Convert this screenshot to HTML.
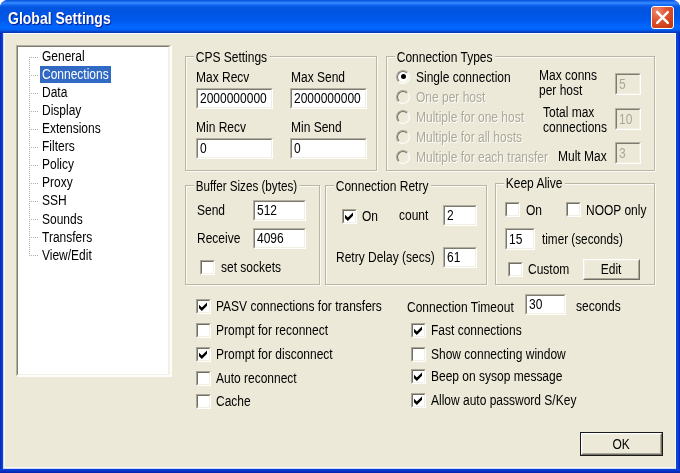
<!DOCTYPE html>
<html><head><meta charset="utf-8"><title>Global Settings</title>
<style>
html{margin:0;padding:0;background:#fff;}
body{margin:0;padding:0;background:transparent;will-change:transform;}
body{width:680px;height:473px;position:relative;overflow:hidden;font-family:"Liberation Sans",sans-serif;font-size:12px;color:#000;}
#win{position:absolute;left:0;top:0;width:680px;height:473px;background:linear-gradient(to right,#0424a8 0px,#0a40dc 2px,#0a40dc 678px,#0424a8 680px);border-radius:8px 8px 0 0;overflow:hidden;}
#title{position:absolute;left:0;top:0;width:680px;height:33px;background:linear-gradient(to bottom,#0a4fd6 0px,#1162ee 1px,#3a8cff 3px,#1168f0 5px,#0556e0 7px,#0054e0 11px,#0059ec 20px,#0067ff 27px,#0061f5 30px,#0a3cbc 32px,#0836b4 33px);}
#title span{position:absolute;left:8px;top:10px;font-size:16px;transform:scaleX(.875);transform-origin:0 0;font-weight:bold;color:#fff;text-shadow:1px 1px 1px #0a1883;white-space:nowrap;}
#close{position:absolute;left:651px;top:6px;width:23px;height:23px;border:1px solid #fff;border-radius:3px;background:radial-gradient(circle at 25% 20%,#ee8a6e 0%,#e0542f 40%,#cf4018 75%,#b83410 100%);box-sizing:border-box;}
#close svg{display:block}
#body{position:absolute;left:3px;top:33px;width:673px;height:436px;background:#ece9d8;box-sizing:border-box;border:1px solid;border-color:#fdfdff #f4f4fb #ccd6f7 #ccd6f7;}
#body:before{content:"";position:absolute;left:0;top:0;right:0;bottom:0;border:1px solid;border-color:#ece9d8 #ece9d8 #f9f8f2 #f9f8f2;}
.abs{position:absolute;white-space:nowrap;}
.t{position:absolute;white-space:nowrap;line-height:14px;height:14px;font-size:14px;transform:scaleX(.857);transform-origin:0 0;}
.s{display:inline-block;font-size:14px;transform:scaleX(.857);transform-origin:0 0;white-space:nowrap;}
.btn .s{transform-origin:50% 0;}
.dis{color:#aca899;text-shadow:1px 1px 0 #fff;}
#tree{position:absolute;left:16px;top:45px;width:156px;height:332px;box-sizing:border-box;background:#fff;border:solid;border-width:1px 2px 2px 1px;border-color:#b3b0a2 #fdfdfa #fdfdfa #b3b0a2;}
#tree:before{content:"";position:absolute;left:0;top:0;right:0;bottom:0;border:solid;border-width:1px 2px 1px 1px;border-color:#7d7b70 #f3f1e6 #f3f1e6 #7d7b70;}
.ti{position:absolute;left:42px;height:18px;line-height:17px;white-space:nowrap;font-size:14px;transform:scaleX(.857);transform-origin:0 0;}
.dots{position:absolute;left:29px;width:9px;height:0;border-top:1px dotted #b0aea4;}
.grp{position:absolute;box-sizing:border-box;border:1px solid #b9b6a6;box-shadow:1px 1px 0 #fbfaf5,inset 1px 1px 0 #fbfaf5;}
.grp>b{position:absolute;top:-7px;left:8px;font-weight:normal;background:#ece9d8;padding:0 3px 0 2px;line-height:14px;white-space:nowrap;font-size:14px;transform:scaleX(.857);transform-origin:0 0;}
.in{position:absolute;box-sizing:border-box;background:#fff;border:1px solid;border-color:#b3b0a2 #fff #fff #b3b0a2;height:21px;line-height:18px;padding-left:3px;}
.in:before{content:"";position:absolute;left:0;top:0;right:0;bottom:0;border:1px solid;border-color:#7d7b70 #f1efe2 #f1efe2 #7d7b70;}
.in.d{background:#ece9d8;color:#aca899;}
.cb{position:absolute;box-sizing:border-box;width:15px;height:15px;background:#fff;border:1px solid;border-color:#a9a698 #fff #fff #a9a698;}
.cb:before{content:"";position:absolute;left:0;top:0;right:0;bottom:0;border:1px solid;border-color:#716f64 #f1efe2 #f1efe2 #716f64;}
.cb svg{position:absolute;left:2px;top:2.5px;overflow:visible;}
.rb{position:absolute;box-sizing:border-box;width:14px;height:14px;border-radius:50%;background:#fff;border:1px solid;border-color:#a9a698 #fff #fff #a9a698;}
.rb:before{content:"";position:absolute;left:0;top:0;right:0;bottom:0;border-radius:50%;border:1px solid;border-color:#716f64 #f1efe2 #f1efe2 #716f64;}
.rb.d{background:#ece9d8;}
.rb.on:after{content:"";position:absolute;left:3.5px;top:3px;width:5px;height:5px;border-radius:50%;background:#000;}
.btn{position:absolute;box-sizing:border-box;background:#ece9d8;border:1px solid;border-color:#fff #716f64 #716f64 #fff;text-align:center;}
.btn:before{content:"";position:absolute;left:0;top:0;right:0;bottom:0;border:1px solid;border-color:#f1efe2 #aca899 #aca899 #f1efe2;}
.btn.def{border-color:#1a1a1a;}
.btn.def:before{border-color:#fff #716f64 #716f64 #fff;}
.btn.def:after{content:"";position:absolute;left:1px;top:1px;right:1px;bottom:1px;border:1px solid;border-color:#f1efe2 #aca899 #aca899 #f1efe2;}
</style></head><body>
<div id="win">
<div id="title"><span>Global Settings</span>
<div id="close"><svg width="21" height="21" viewBox="0 0 21 21"><path d="M5.2 5.2L15.8 15.8M15.8 5.2L5.2 15.8" stroke="#fff" stroke-width="2.5" stroke-linecap="round"/></svg></div>
</div>
<div id="body"></div>
<div style="position:absolute;left:0;top:469px;width:680px;height:4px;background:linear-gradient(to bottom,#0a40dc 0,#0a3cd4 1px,#0424a8 4px)"></div>
</div>

<div id="tree"></div>
<div class="abs" style="left:40px;top:66px;width:71px;height:17px;background:#316ac5"></div>
<div class="dots" style="top:57px"></div><div class="ti" style="top:48px">General</div>
<div class="dots" style="top:75px"></div><div class="ti" style="top:66px;color:#fff">Connections</div>
<div class="dots" style="top:93px"></div><div class="ti" style="top:84px">Data</div>
<div class="dots" style="top:111px"></div><div class="ti" style="top:102px">Display</div>
<div class="dots" style="top:129px"></div><div class="ti" style="top:120px">Extensions</div>
<div class="dots" style="top:147px"></div><div class="ti" style="top:138px">Filters</div>
<div class="dots" style="top:165px"></div><div class="ti" style="top:156px">Policy</div>
<div class="dots" style="top:183px"></div><div class="ti" style="top:174px">Proxy</div>
<div class="dots" style="top:201px"></div><div class="ti" style="top:192px">SSH</div>
<div class="dots" style="top:219px"></div><div class="ti" style="top:211px">Sounds</div>
<div class="dots" style="top:237px"></div><div class="ti" style="top:229px">Transfers</div>
<div class="dots" style="top:255px"></div><div class="ti" style="top:247px">View/Edit</div>
<div class="abs" style="left:29px;top:57px;width:0;height:199px;border-left:1px dotted #b0aea4"></div>

<!-- CPS Settings -->
<div class="grp" style="left:185px;top:56px;width:192px;height:115px"><b>CPS Settings</b></div>
<div class="t" style="left:196px;top:70px">Max Recv</div>
<div class="t" style="left:291px;top:70px">Max Send</div>
<div class="in" style="left:196px;top:88px;width:77px"><span class="s">2000000000</span></div>
<div class="in" style="left:290px;top:88px;width:77px"><span class="s">2000000000</span></div>
<div class="t" style="left:196px;top:120px">Min Recv</div>
<div class="t" style="left:291px;top:120px">Min Send</div>
<div class="in" style="left:196px;top:138px;width:77px"><span class="s">0</span></div>
<div class="in" style="left:290px;top:138px;width:77px"><span class="s">0</span></div>

<!-- Connection Types -->
<div class="grp" style="left:386px;top:56px;width:269px;height:115px"><b>Connection Types</b></div>
<div class="rb on" style="left:396px;top:70px"></div><div class="t" style="left:416px;top:70px">Single connection</div>
<div class="rb d" style="left:396px;top:90px"></div><div class="t dis" style="left:416px;top:90px">One per host</div>
<div class="rb d" style="left:396px;top:110px"></div><div class="t dis" style="left:416px;top:110px">Multiple for one host</div>
<div class="rb d" style="left:396px;top:130px"></div><div class="t dis" style="left:416px;top:130px">Multiple for all hosts</div>
<div class="rb d" style="left:396px;top:150px"></div><div class="t dis" style="left:416px;top:150px">Multiple for each transfer</div>
<div class="t" style="left:539px;top:68px">Max conns</div>
<div class="t" style="left:539px;top:83px">per host</div>
<div class="in d" style="left:615px;top:73px;width:26px;height:22px;line-height:20px"><span class="s">5</span></div>
<div class="t" style="left:543px;top:105px">Total max</div>
<div class="t" style="left:543px;top:120px">connections</div>
<div class="in d" style="left:615px;top:108px;width:26px;height:22px;line-height:20px"><span class="s">10</span></div>
<div class="t" style="left:558px;top:149px">Mult Max</div>
<div class="in d" style="left:615px;top:142px;width:26px;height:22px;line-height:20px"><span class="s">3</span></div>

<!-- Buffer sizes -->
<div class="grp" style="left:185px;top:185px;width:135px;height:100px"><b style="transform:scaleX(.832)">Buffer Sizes (bytes)</b></div>
<div class="t" style="left:197px;top:203px">Send</div>
<div class="in" style="left:253px;top:200px;width:53px"><span class="s">512</span></div>
<div class="t" style="left:197px;top:231px">Receive</div>
<div class="in" style="left:253px;top:228px;width:53px"><span class="s">4096</span></div>
<div class="cb" style="left:200px;top:260px"></div><div class="t" style="left:221px;top:260px">set sockets</div>

<!-- Connection retry -->
<div class="grp" style="left:325px;top:185px;width:162px;height:100px"><b>Connection Retry</b></div>
<div class="cb" style="left:342px;top:209px"><svg width="8" height="8" viewBox="0 0 7 7"><path d="M0 1.5L2.5 4L7 -0.5V2.5L2.5 7L0 4.5Z" fill="#000"/></svg></div>
<div class="t" style="left:362px;top:209px">On</div>
<div class="t" style="left:399px;top:208px">count</div>
<div class="in" style="left:443px;top:205px;width:34px"><span class="s">2</span></div>
<div class="t" style="left:336px;top:250px">Retry Delay (secs)</div>
<div class="in" style="left:443px;top:247px;width:34px"><span class="s">61</span></div>

<!-- Keep alive -->
<div class="grp" style="left:495px;top:183px;width:160px;height:102px"><b style="top:-8px">Keep Alive</b></div>
<div class="cb" style="left:505px;top:202px"></div><div class="t" style="left:526px;top:203px">On</div>
<div class="cb" style="left:566px;top:202px"></div><div class="t" style="left:586px;top:203px">NOOP only</div>
<div class="in" style="left:505px;top:228px;width:30px;height:22px;line-height:20px"><span class="s">15</span></div>
<div class="t" style="left:542px;top:232px;transform:scaleX(.838)">timer (seconds)</div>
<div class="cb" style="left:508px;top:262px"></div><div class="t" style="left:528px;top:262px">Custom</div>
<div class="btn" style="left:583px;top:259px;width:57px;height:21px;line-height:18px"><span class="s">Edit</span></div>

<!-- bottom left checks -->
<div class="cb" style="left:196px;top:299px"><svg width="8" height="8" viewBox="0 0 7 7"><path d="M0 1.5L2.5 4L7 -0.5V2.5L2.5 7L0 4.5Z" fill="#000"/></svg></div><div class="t" style="left:216px;top:299px">PASV connections for transfers</div>
<div class="cb" style="left:196px;top:323px"></div><div class="t" style="left:216px;top:323px">Prompt for reconnect</div>
<div class="cb" style="left:196px;top:347px"><svg width="8" height="8" viewBox="0 0 7 7"><path d="M0 1.5L2.5 4L7 -0.5V2.5L2.5 7L0 4.5Z" fill="#000"/></svg></div><div class="t" style="left:216px;top:347px">Prompt for disconnect</div>
<div class="cb" style="left:196px;top:371px"></div><div class="t" style="left:216px;top:371px">Auto reconnect</div>
<div class="cb" style="left:196px;top:394px"></div><div class="t" style="left:216px;top:394px">Cache</div>

<!-- bottom right -->
<div class="t" style="left:407px;top:300px">Connection Timeout</div>
<div class="in" style="left:525px;top:294px;width:41px"><span class="s">30</span></div>
<div class="t" style="left:576px;top:299px">seconds</div>
<div class="cb" style="left:411px;top:323px"><svg width="8" height="8" viewBox="0 0 7 7"><path d="M0 1.5L2.5 4L7 -0.5V2.5L2.5 7L0 4.5Z" fill="#000"/></svg></div><div class="t" style="left:431px;top:323px">Fast connections</div>
<div class="cb" style="left:411px;top:347px"></div><div class="t" style="left:431px;top:347px">Show connecting window</div>
<div class="cb" style="left:411px;top:369px"><svg width="8" height="8" viewBox="0 0 7 7"><path d="M0 1.5L2.5 4L7 -0.5V2.5L2.5 7L0 4.5Z" fill="#000"/></svg></div><div class="t" style="left:431px;top:369px">Beep on sysop message</div>
<div class="cb" style="left:411px;top:393px"><svg width="8" height="8" viewBox="0 0 7 7"><path d="M0 1.5L2.5 4L7 -0.5V2.5L2.5 7L0 4.5Z" fill="#000"/></svg></div><div class="t" style="left:431px;top:393px">Allow auto password S/Key</div>

<div class="btn def" style="left:580px;top:432px;width:83px;height:24px;line-height:22px"><span class="s">OK</span></div>
</body></html>
